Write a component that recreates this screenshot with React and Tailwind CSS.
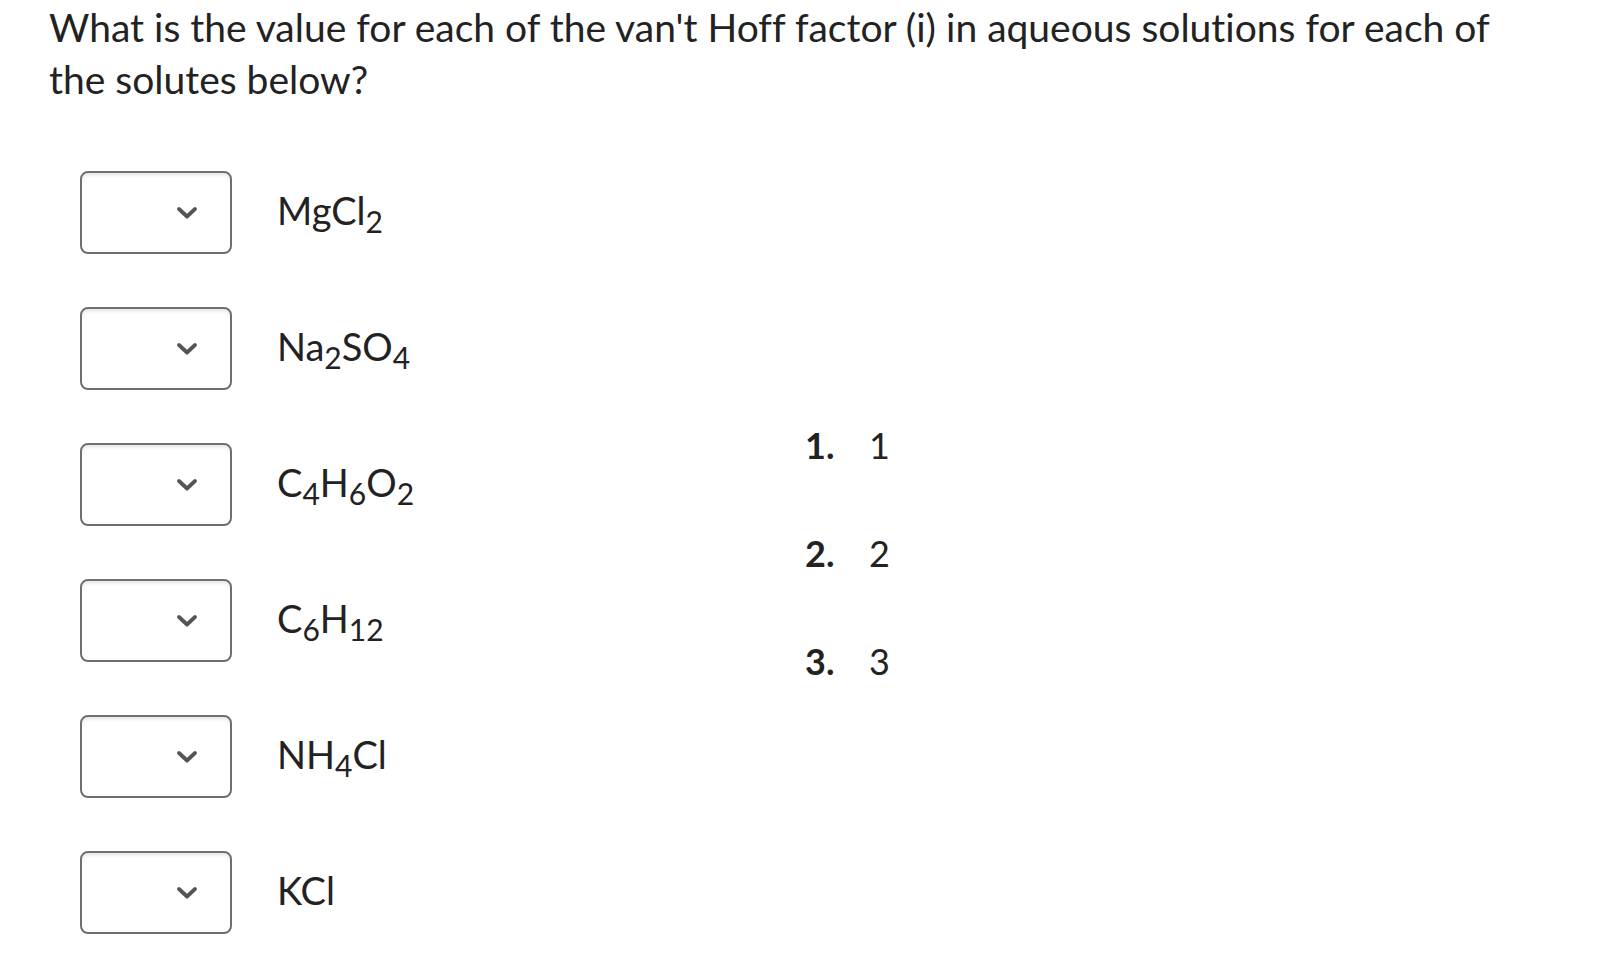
import React from "react";

const solutes = [
  { key: "mgcl2", parts: ["MgCl", ["2"]] },
  { key: "na2so4", parts: ["Na", ["2"], "SO", ["4"]] },
  { key: "c4h6o2", parts: ["C", ["4"], "H", ["6"], "O", ["2"]] },
  { key: "c6h12", parts: ["C", ["6"], "H", ["12"]] },
  { key: "nh4cl", parts: ["NH", ["4"], "Cl"] },
  { key: "kcl", parts: ["KCl"] },
];

const choices = ["1", "2", "3"];

function Formula({ parts }) {
  return (
    <span>
      {parts.map((p, i) =>
        Array.isArray(p) ? (
          <span key={i} className="relative top-[8px] text-[30px] leading-[0]">
            {p[0]}
          </span>
        ) : (
          <span key={i}>{p}</span>
        )
      )}
    </span>
  );
}

function Chevron() {
  return (
    <svg width="22" height="14" viewBox="0 0 22 14" fill="none">
      <polyline
        points="3,3 11,10.5 19,3"
        stroke="#555"
        strokeWidth="3.8"
        strokeLinecap="round"
        strokeLinejoin="round"
      />
    </svg>
  );
}

function Dropdown() {
  return (
    <div className="flex h-[83px] w-[152px] shrink-0 items-center justify-end rounded-[8px] border-2 border-[#6f6f6f] bg-white pr-[32px] shadow-[inset_0_4px_3px_-1px_#ececec]">
      <Chevron />
    </div>
  );
}

export default function App() {
  return (
    <div
      className="min-h-screen w-[1600px] bg-white pl-[49px] pr-[70px] text-[#222] [font-variant-ligatures:none]"
      style={{ fontFamily: "Lato, 'Noto Sans', sans-serif" }}
    >
      <p className="pt-[1px] text-[39px] leading-[52px]">
        What is the value for each of the van't Hoff factor (i) in aqueous solutions for each of the solutes below?
      </p>

      <div className="mt-[66px] flex items-center">
        <div className="flex w-[756px] flex-col gap-[53px] pl-[31px]">
          {solutes.map((s) => (
            <div key={s.key} className="flex items-center gap-[45px]">
              <Dropdown />
              <div className="pb-[6px] text-[38px] leading-[40px]">
                <Formula parts={s.parts} />
              </div>
            </div>
          ))}
        </div>

        <ol className="flex flex-col gap-[68px] text-[36px] leading-[40px]">
          {choices.map((c, i) => (
            <li key={c} className="flex">
              <span className="w-[64px] font-bold">{i + 1}.</span>
              <span>{c}</span>
            </li>
          ))}
        </ol>
      </div>
    </div>
  );
}
